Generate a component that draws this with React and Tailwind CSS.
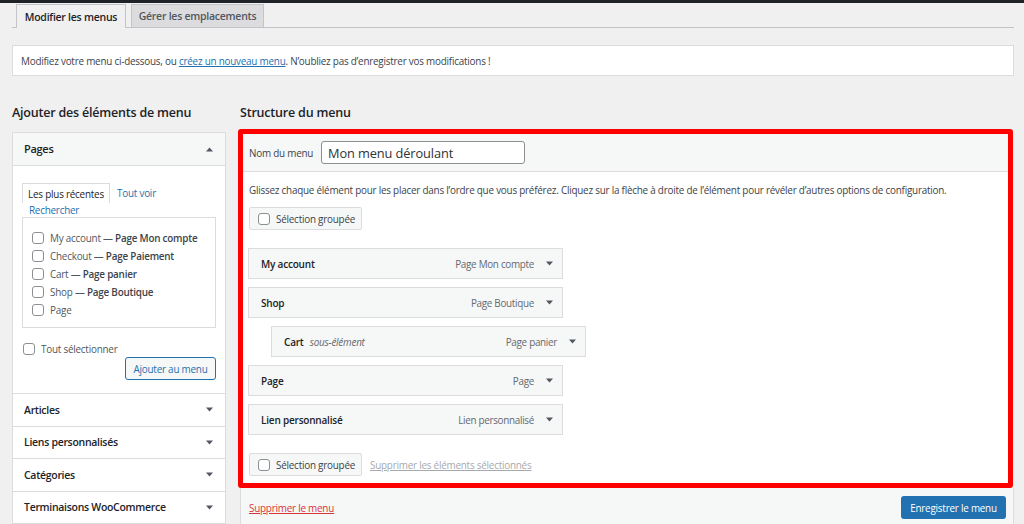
import React from 'react'

const font = { fontFamily: '"Open Sans", "Noto Sans", sans-serif' }

function Box({ className = '' }) {
  return <span className={`inline-block w-[12px] h-[12px] rounded-[3px] border border-[#8c8f94] bg-white shrink-0 ${className}`} />
}

function Caret({ up }) {
  return (
    <svg width="7" height="5" viewBox="0 0 7 5" className="shrink-0">
      {up ? <path d="M0 4.5 L3.5 0.5 L7 4.5 Z" fill="#50575e" /> : <path d="M0 0.5 L3.5 4.5 L7 0.5 Z" fill="#50575e" />}
    </svg>
  )
}

const pages = [
  ['My account', 'Page Mon compte'],
  ['Checkout', 'Page Paiement'],
  ['Cart', 'Page panier'],
  ['Shop', 'Page Boutique'],
]

const sections = ['Articles', 'Liens personnalisés', 'Catégories', 'Terminaisons WooCommerce']

const items = [
  { title: 'My account', type: 'Page Mon compte' },
  { title: 'Shop', type: 'Page Boutique' },
  { title: 'Cart', type: 'Page panier', sub: true },
  { title: 'Page', type: 'Page' },
  { title: 'Lien personnalisé', type: 'Lien personnalisé' },
]

function MenuItem({ item }) {
  return (
    <div className={`h-[31px] w-[315px] flex items-center bg-[#f6f7f7] border border-[#dcdcde] pl-[12px] pr-[9px] ${item.sub ? 'ml-[23px]' : ''}`}>
      <span className="font-semibold text-[10px] tracking-[-0.2px] text-[#1d2327]">{item.title}</span>
      {item.sub && <span className="italic text-[#646970] ml-[6px]">sous-élément</span>}
      <span className="ml-auto text-[#646970] mr-[12px] tracking-[-0.3px]">{item.type}</span>
      <Caret />
    </div>
  )
}

function GroupButton() {
  return (
    <div className="inline-flex items-center h-[23px] w-[113px] pl-[8px] gap-[6px] bg-[#f6f7f7] border border-[#dcdcde] rounded-[2px] text-[#3c434a]">
      <Box />
      <span>Sélection groupée</span>
    </div>
  )
}

export default function App() {
  return (
    <div style={font} className="w-[1024px] h-[524px] overflow-hidden bg-[#f0f0f1] text-[#1d2327] text-[9.9px] tracking-[-0.22px] leading-[14px]">
      <div className="h-[3px] bg-[#1d2327]" />

      {/* tabs */}
      <div className="ml-[12px] mr-[10px] mt-[1px] h-[24px] border-b border-[#c3c4c7] flex items-end pl-[4px] gap-[5px]">
        <div className="h-[24px] w-[110px] -mb-px flex items-center justify-center bg-[#f0f0f1] border border-b-0 border-[#c3c4c7] text-[10.5px] tracking-[-0.25px] font-semibold text-[#1d2327]">
          Modifier les menus
        </div>
        <div className="h-[23px] w-[133px] flex items-center justify-center bg-[#dcdcde] border border-b-0 border-[#c3c4c7] text-[10.5px] tracking-[-0.25px] font-semibold text-[#50575e]">
          Gérer les emplacements
        </div>
      </div>

      {/* notice */}
      <div className="ml-[12px] mr-[10px] mt-[17px] h-[31px] bg-white border border-[#dcdcde] flex items-center px-[8px] text-[#3c434a]">
        <span>
          Modifiez votre menu ci-dessous, ou{' '}
          <span className="text-[#2271b1] underline">créez un nouveau menu</span>. N’oubliez pas d’enregistrer vos modifications !
        </span>
      </div>

      <div className="flex pl-[12px] mt-[27px] gap-[14px]">
        {/* left column */}
        <div className="w-[214px] shrink-0">
          <h2 className="h-[20px] leading-[20px] text-[12.5px] tracking-[-0.2px] font-semibold text-[#1d2327]">Ajouter des éléments de menu</h2>
          <div className="mt-[9px] bg-white border border-[#dcdcde]">
            <div className="h-[33px] flex items-center justify-between pl-[11px] pr-[12px] bg-[#f6f7f7] border-b border-[#dcdcde]">
              <span className="text-[11px] tracking-[-0.3px] font-semibold">Pages</span>
              <Caret up />
            </div>
            <div className="px-[9px] pt-[17px] pb-[13px]">
              <div className="flex flex-wrap items-end">
                <span className="h-[20px] w-[88px] flex items-center justify-center border border-b-0 border-[#dcdcde] text-[#1d2327]">Les plus récentes</span>
                <span className="h-[20px] px-[7px] flex items-center text-[#2271b1]">Tout voir</span>
                <span className="w-full px-[7px] h-[14px] text-[#2271b1]">Rechercher</span>
              </div>
              <div className="h-[111px] border border-[#dcdcde] pt-[11px] px-[9px]">
                {pages.map(([a, b]) => (
                  <div key={a} className="h-[18px] flex items-center gap-[6px] text-[#50575e]">
                    <Box />
                    <span>
                      {a} — <span className="font-semibold text-[#3c434a]">{b}</span>
                    </span>
                  </div>
                ))}
                <div className="h-[18px] flex items-center gap-[6px] text-[#50575e]">
                  <Box />
                  <span>Page</span>
                </div>
              </div>
              <div className="mt-[14px] h-[14px] flex items-center gap-[6px] text-[#50575e] pl-[1px]">
                <Box />
                <span>Tout sélectionner</span>
              </div>
              <div className="flex justify-end mt-[1px]">
                <div className="h-[23px] w-[91px] flex items-center justify-center rounded-[3px] border border-[#2271b1] bg-[#f6f7f7] text-[#2271b1]">
                  Ajouter au menu
                </div>
              </div>
            </div>
            {sections.map((s) => (
              <div key={s} className="h-[32.5px] flex items-center justify-between pl-[11px] pr-[12px] border-t border-[#dcdcde]">
                <span className="text-[10.5px] tracking-[-0.3px] font-semibold">{s}</span>
                <Caret />
              </div>
            ))}
          </div>
        </div>

        {/* right column */}
        <div className="w-[774px] shrink-0">
          <h2 className="h-[20px] leading-[20px] text-[12.5px] tracking-[-0.2px] font-semibold text-[#1d2327]">Structure du menu</h2>
          <div className="mt-[6px] -ml-[2px] w-[775px] border-[5px] border-[#ff0000] rounded-[3px] bg-white">
            <div className="h-[38px] flex items-center px-[6px] bg-[#f6f7f7] border-b border-[#dcdcde]">
              <span className="w-[72px] text-[#3c434a]">Nom du menu</span>
              <div className="h-[23px] w-[204px] rounded-[3px] border border-[#8c8f94] bg-white flex items-center px-[6px] text-[12.8px] tracking-[-0.1px] text-[#2c3338]">
                Mon menu déroulant
              </div>
            </div>
            <div className="px-[6px] pb-[7px]">
              <p className="mt-[11px] text-[#3c434a] whitespace-nowrap">
                Glissez chaque élément pour les placer dans l’ordre que vous préférez. Cliquez sur la flèche à droite de l’élément pour révéler d’autres options de configuration.
              </p>
              <div className="mt-[10px]">
                <GroupButton />
              </div>
              <div className="mt-[18px] -ml-[1px] flex flex-col gap-[8px]">
                {items.map((it) => (
                  <MenuItem key={it.title} item={it} />
                ))}
              </div>
              <div className="mt-[18px] flex items-center gap-[8px]">
                <GroupButton />
                <span className="text-[#a7aaad] underline">Supprimer les éléments sélectionnés</span>
              </div>
            </div>
          </div>
          <div className="h-[40px] bg-[#f6f7f7] border-x border-[#dcdcde] flex items-start justify-between pl-[8px] pr-[7px] pt-[8px]">
            <span className="mt-[5px] text-[#d63638] underline">Supprimer le menu</span>
            <div className="h-[23px] w-[105px] rounded-[3px] bg-[#2271b1] text-white flex items-center justify-center">
              Enregistrer le menu
            </div>
          </div>
        </div>
      </div>
    </div>
  )
}
